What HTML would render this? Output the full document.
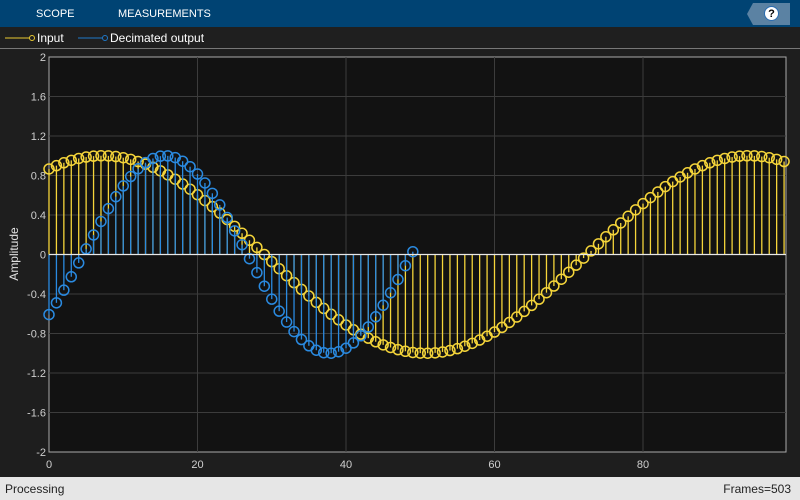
<!DOCTYPE html>
<html><head><meta charset="utf-8"><style>
body{margin:0;width:800px;height:500px;overflow:hidden;background:#1e1e1e;font-family:"Liberation Sans",sans-serif}
#top{position:absolute;left:0;top:0;width:800px;height:27px;background:#004373}
.tab{position:absolute;top:8px;color:#fff;font-size:11px}
#help{position:absolute;left:747px;top:3px;width:43px;height:22px;background:#5b82a3;clip-path:polygon(0 50%,6px 0,100% 0,100% 100%,6px 100%)}
#leg{position:absolute;left:0;top:27px;width:800px;height:21px;background:#1f1f1f;border-bottom:1px solid #777}
#status{position:absolute;left:0;top:477px;width:800px;height:23px;background:#e6e6e6;font-size:12px;color:#222}
</style></head><body>
<div id="top">
<span class="tab" style="left:36px">SCOPE</span>
<span class="tab" style="left:118px">MEASUREMENTS</span>
<div id="help"></div>
<div style="position:absolute;left:764px;top:6px;width:15px;height:15px;border-radius:50%;background:#fff;border:1px solid #2a6cb0;box-sizing:border-box;text-align:center;font:bold 11px/14px 'Liberation Sans',sans-serif;color:#000">?</div>
</div>
<div id="leg">
<svg width="800" height="21" style="position:absolute;left:0;top:0">
<line x1="5" y1="11" x2="30" y2="11" stroke="#e8c830"/><circle cx="32" cy="11" r="2.5" fill="none" stroke="#e8c830"/>
<line x1="78" y1="11" x2="103" y2="11" stroke="#1f78c8"/><circle cx="105" cy="11" r="2.5" fill="none" stroke="#1f78c8"/>
</svg>
<span style="position:absolute;left:37px;top:4px;color:#fff;font-size:12px">Input</span>
<span style="position:absolute;left:110px;top:4px;color:#fff;font-size:12px">Decimated output</span>
</div>
<svg id="plot" width="800" height="429" style="position:absolute;left:0;top:48px"></svg>
<div id="status"><span style="position:absolute;left:5px;top:5px">Processing</span><span style="position:absolute;right:9px;top:5px">Frames=503</span></div>
<script>
var s=document.getElementById('plot'),o='',T=-48;
function X(n){return 49+n*7.425}function Y(v){return 254.5-v*98.75+T}
o+='<rect x="49" y="'+(57+T)+'" width="737" height="395" fill="#121212" stroke="#aaa"/>';
for(var i=-5;i<=5;i++){var y=Y(i*0.4);if(i!=0&&Math.abs(i)<5)o+='<line x1="49" x2="786" y1="'+y+'" y2="'+y+'" stroke="#3c3c3c"/>';
var lab=(i*0.4).toFixed(1).replace('.0','');if(i==0)lab='0';if(Math.abs(i)==5)lab=i>0?'2':'-2';
o+='<text x="46" y="'+(y+4)+'" fill="#cfcfcf" font-size="11" text-anchor="end" font-family="Liberation Sans">'+lab+'</text>';}
for(var k=0;k<=4;k++){var x=X(k*20);if(k>0)o+='<line y1="'+(57+T)+'" y2="'+(452+T)+'" x1="'+x+'" x2="'+x+'" stroke="#3c3c3c"/>';
o+='<text x="'+x+'" y="'+(468+T)+'" fill="#cfcfcf" font-size="11" text-anchor="middle" font-family="Liberation Sans">'+(k*20)+'</text>';}
o+='<text transform="translate(18,'+(254+T)+') rotate(-90)" fill="#e0e0e0" font-size="12" text-anchor="middle" font-family="Liberation Sans">Amplitude</text>';
for(var n=0;n<100;n++){var v=Math.sin(2*Math.PI*(n+14.5)/87);o+='<line x1="'+X(n)+'" x2="'+X(n)+'" y1="'+Y(0)+'" y2="'+Y(v)+'" stroke="#f5d53a" stroke-width="1.3"/><circle cx="'+X(n)+'" cy="'+Y(v)+'" r="5" fill="none" stroke="#f5d53a" stroke-width="1.5"/>';}
for(var n=0;n<50;n++){var v=Math.sin(2*Math.PI*(n-4.6)/44.2);o+='<line x1="'+X(n)+'" x2="'+X(n)+'" y1="'+Y(0)+'" y2="'+Y(v)+'" stroke="#2a8ae0" stroke-width="1.3"/><circle cx="'+X(n)+'" cy="'+Y(v)+'" r="5" fill="none" stroke="#2a8ae0" stroke-width="1.5"/>';}
o+='<line x1="49" x2="786" y1="'+Y(0)+'" y2="'+Y(0)+'" stroke="#e8e8e8" stroke-width="1.3"/>';
s.innerHTML=o;
</script>
</body></html>
